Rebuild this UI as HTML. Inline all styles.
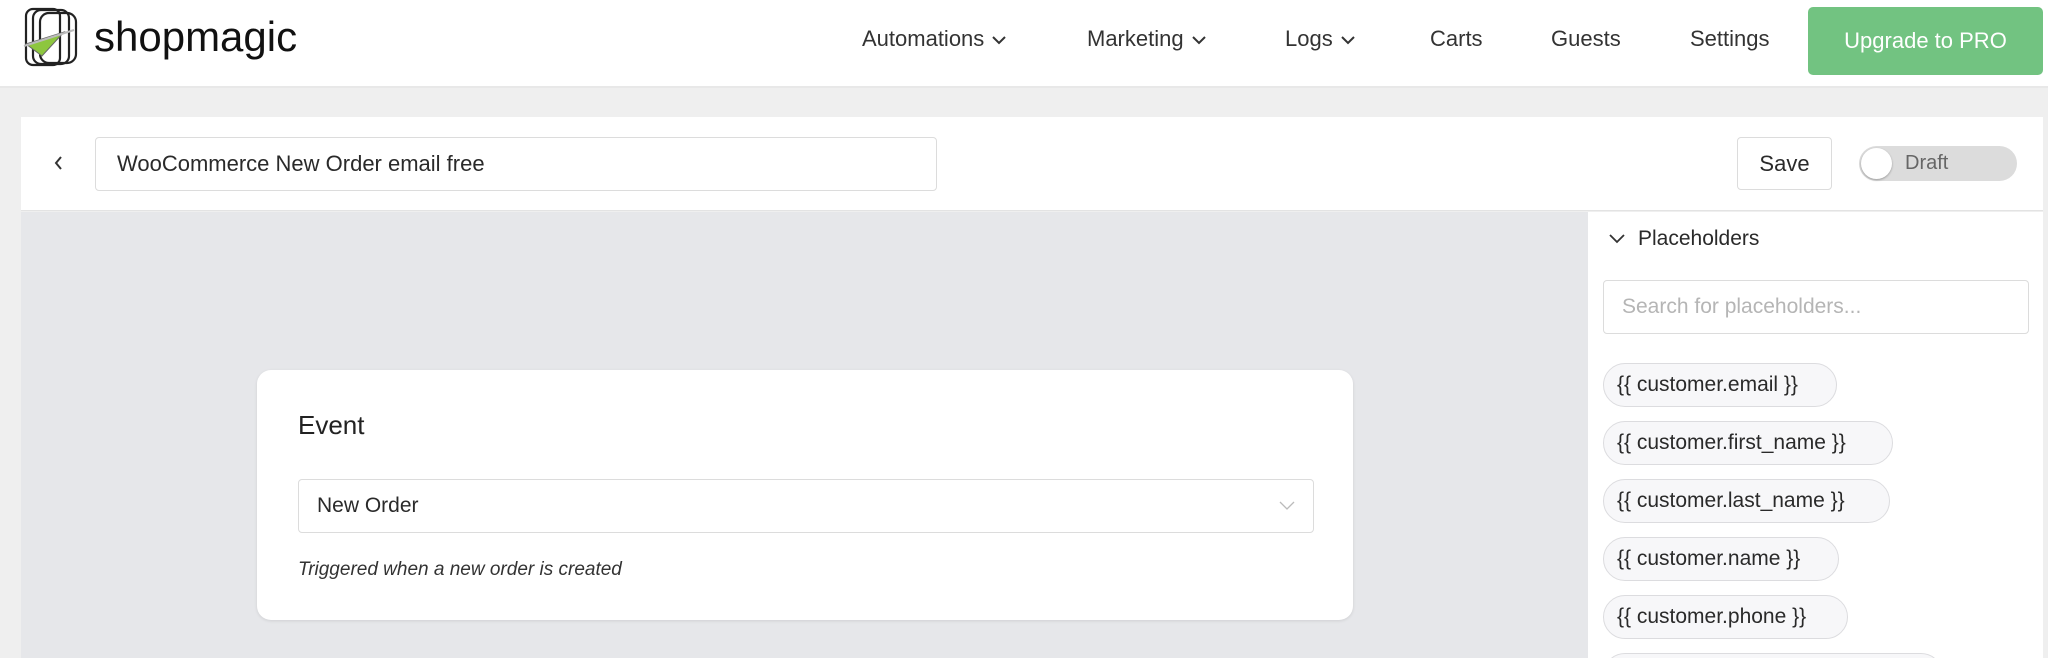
<!DOCTYPE html>
<html style="width:2048px;height:658px;overflow:hidden"><head><meta charset="utf-8"><style>
*{box-sizing:border-box;margin:0;padding:0}
body{width:2048px;height:658px;overflow:hidden;background:#efefef;font-family:"Liberation Sans",sans-serif;color:#2a2a2a;position:relative}
.hdr{position:absolute;left:0;top:0;width:2048px;height:88px;background:#fff;border-bottom:2px solid #e8e8e8}
.nav{position:absolute;top:26px;font-size:22px;color:#333}
.nav svg{vertical-align:middle;margin-left:8px}
.up{position:absolute;left:1808px;top:7px;width:235px;height:68px;background:#72c381;border-radius:5px;color:#fff;font-size:22px;text-align:center;line-height:68px}
.bar{position:absolute;left:21px;top:117px;width:2022px;height:94px;background:#fff;border-bottom:1px solid #e3e3e3}
.canvas{position:absolute;left:21px;top:212px;width:1567px;height:446px;background:#e6e7ea}
.panel{position:absolute;left:1588px;top:212px;width:455px;height:446px;background:#fff;overflow:hidden}
.inp{position:absolute;border:1px solid #dcdcdc;border-radius:4px;background:#fff}
.chip{position:absolute;left:15px;height:44px;border:1px solid #dcdcdf;border-radius:22px;background:#f7f7f9;font-size:21px;line-height:42px;padding-left:13px;color:#2a2a2a}
</style></head><body>
<div class="hdr">
<svg style="position:absolute;left:22px;top:6px" width="60" height="64" viewBox="0 0 60 64" fill="none" stroke="#222" stroke-width="2.2">
<rect x="4" y="3" width="34" height="56" rx="7"/><rect x="11" y="4" width="36" height="54" rx="8"/><rect x="18" y="7" width="36" height="50" rx="9"/>
<path d="M4 38 L42 26 L20 50 Z" fill="#8dc63f" stroke="#666" stroke-width="1"/><path d="M2 40 L52 24" stroke="#bbb" stroke-width="2"/></svg>
<div style="position:absolute;left:94px;top:13px;font-size:42px;color:#111">shopmagic</div>
<div class="nav" style="left:862px">Automations<svg width="14" height="9" viewBox="0 0 14 9"><path d="M1 1l6 6 6-6" stroke="#333" stroke-width="2" fill="none"/></svg></div>
<div class="nav" style="left:1087px">Marketing<svg width="14" height="9" viewBox="0 0 14 9"><path d="M1 1l6 6 6-6" stroke="#333" stroke-width="2" fill="none"/></svg></div>
<div class="nav" style="left:1285px">Logs<svg width="14" height="9" viewBox="0 0 14 9"><path d="M1 1l6 6 6-6" stroke="#333" stroke-width="2" fill="none"/></svg></div>
<div class="nav" style="left:1430px">Carts</div>
<div class="nav" style="left:1551px">Guests</div>
<div class="nav" style="left:1690px">Settings</div>
<div class="up">Upgrade to PRO</div>
</div>
<div class="bar">
<svg style="position:absolute;left:32px;top:38px" width="10" height="16" viewBox="0 0 10 16"><path d="M8 2L3 8l5 6" stroke="#333" stroke-width="2" fill="none"/></svg>
<div class="inp" style="left:74px;top:20px;width:842px;height:54px;font-size:22px;line-height:52px;padding-left:21px">WooCommerce New Order email free</div>
<div class="inp" style="left:1716px;top:20px;width:95px;height:53px;font-size:22px;line-height:51px;text-align:center">Save</div>
<div style="position:absolute;left:1838px;top:29px;width:158px;height:35px;border-radius:18px;background:#dcdcdc">
<div style="position:absolute;left:2px;top:2px;width:31px;height:31px;border-radius:50%;background:#fff;box-shadow:0 1px 2px rgba(0,0,0,.3)"></div>
<div style="position:absolute;left:46px;top:6px;font-size:20px;color:#666">Draft</div></div>
</div>
<div class="canvas">
<div style="position:absolute;left:236px;top:158px;width:1096px;height:250px;background:#fff;border-radius:14px;box-shadow:0 1px 3px rgba(0,0,0,.1)">
<div style="position:absolute;left:41px;top:40px;font-size:26px;color:#222">Event</div>
<div class="inp" style="left:41px;top:109px;width:1016px;height:54px;font-size:21px;line-height:52px;padding-left:18px">New Order
<svg style="position:absolute;right:18px;top:21px" width="16" height="10" viewBox="0 0 16 10"><path d="M1 1l7 7 7-7" stroke="#bbb" stroke-width="1.3" fill="none"/></svg></div>
<div style="position:absolute;left:41px;top:189px;font-size:19px;font-style:italic;color:#333">Triggered when a new order is created</div>
</div></div>
<div class="panel">
<svg style="position:absolute;left:21px;top:22px" width="16" height="10" viewBox="0 0 16 10"><path d="M1 1l7 7 7-7" stroke="#333" stroke-width="1.8" fill="none"/></svg>
<div style="position:absolute;left:50px;top:15px;font-size:21px">Placeholders</div>
<div class="inp" style="left:15px;top:68px;width:426px;height:54px;font-size:21px;line-height:52px;padding-left:18px;color:#b5b5b5">Search for placeholders...</div>
<div class="chip" style="top:151px;width:234px">{{ customer.email }}</div>
<div class="chip" style="top:209px;width:290px">{{ customer.first_name }}</div>
<div class="chip" style="top:267px;width:287px">{{ customer.last_name }}</div>
<div class="chip" style="top:325px;width:236px">{{ customer.name }}</div>
<div class="chip" style="top:383px;width:245px">{{ customer.phone }}</div>
<div class="chip" style="top:441px;width:340px"></div>
</div>
</body></html>
